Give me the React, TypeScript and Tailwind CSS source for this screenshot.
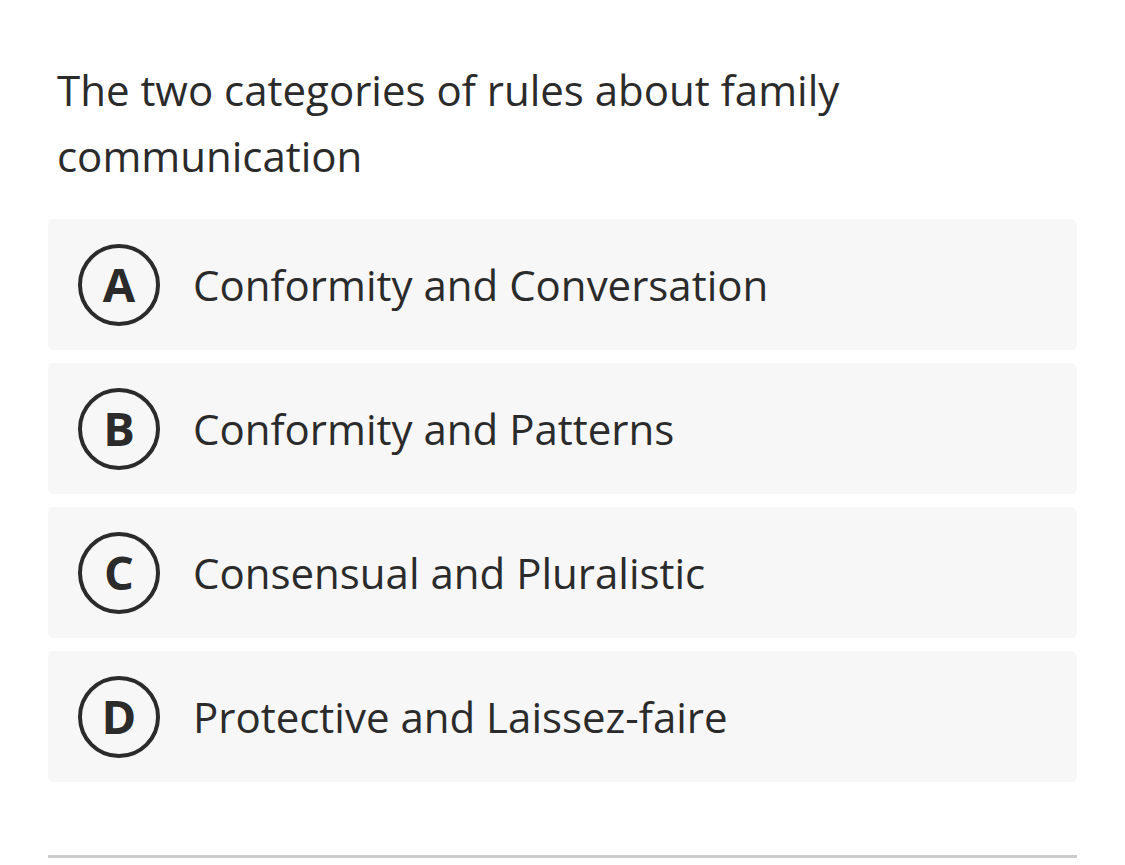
const options = [
  { letter: "A", text: "Conformity and Conversation" },
  { letter: "B", text: "Conformity and Patterns" },
  { letter: "C", text: "Consensual and Pluralistic" },
  { letter: "D", text: "Protective and Laissez-faire" },
];

const App = () => (
  <div className="min-h-[865px] bg-white px-[48px] pt-[57px] font-['Open_Sans',sans-serif] text-[#2b2b2b]">
    <h1 className="pl-[9px] text-[42px] leading-[66px]">
      The two categories of rules about family
      <br />
      communication
    </h1>
    <div className="mt-[30px] flex flex-col gap-[13px]">
      {options.map((o) => (
        <div
          key={o.letter}
          className="flex h-[131px] items-center gap-[33px] rounded-[6px] bg-[#f7f7f7] pl-[30px]"
        >
          <div className="flex h-[82px] w-[82px] shrink-0 items-center justify-center rounded-full border-[4px] border-[#2b2b2b] text-[47px] font-bold leading-none">
            {o.letter}
          </div>
          <span className="text-[42px] leading-none">{o.text}</span>
        </div>
      ))}
    </div>
    <div className="mt-[73px] h-[3px] bg-[#cccccc]" />
  </div>
);

export default App;
